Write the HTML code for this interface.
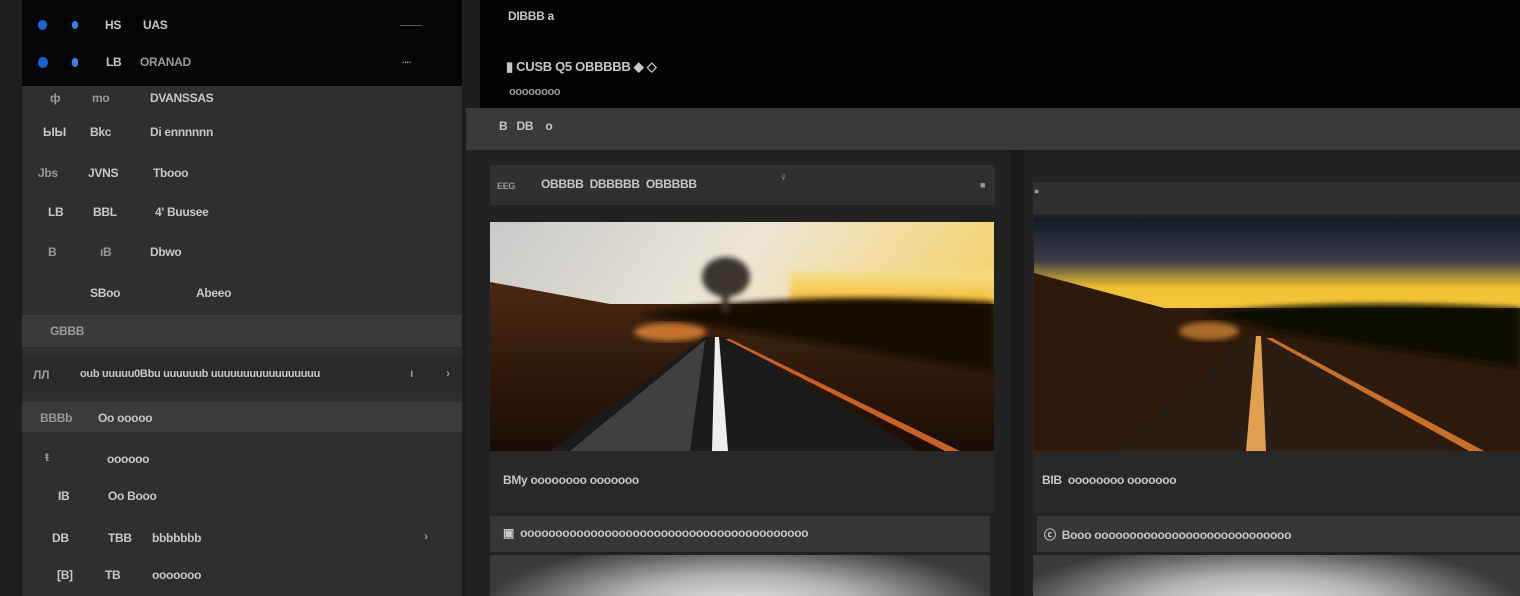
<!DOCTYPE html>
<html><head><meta charset="utf-8"><style>
*{margin:0;padding:0;box-sizing:border-box}
body{width:1520px;height:596px;overflow:hidden;background:#262626;position:relative;font-family:"Liberation Sans",sans-serif;color:#cfcfcf}
.a{position:absolute}
.t{position:absolute;font-size:12px;font-weight:bold;color:#c8c8c8;white-space:nowrap;letter-spacing:-0.3px}
.d{color:#9a9a9a}
</style></head><body>
<div class="a" style="left:0;top:0;width:22px;height:596px;background:#1e1e1e"></div>
<div class="a" style="left:22px;top:0;width:440px;height:596px;background:#2f2f2f"></div>
<div class="a" style="left:22px;top:0;width:440px;height:86px;background:#050505"></div>
<div class="a" style="left:38px;top:20px;width:9px;height:10px;border-radius:5px;background:#1e63d8"></div>
<div class="a" style="left:72px;top:21px;width:6px;height:8px;border-radius:3px;background:#3a7fe0"></div>
<div class="a" style="left:38px;top:57px;width:10px;height:11px;border-radius:5px;background:#1e5fd0"></div>
<div class="a" style="left:72px;top:58px;width:6px;height:9px;border-radius:3px;background:#3a7fe0"></div>
<div class="t" style="left:105px;top:18px">HS</div><div class="t" style="left:143px;top:18px">UAS</div>
<div class="t" style="left:106px;top:55px">LB</div><div class="t d" style="left:140px;top:55px">ORANAD</div>
<div class="a" style="left:400px;top:25px;width:22px;height:1px;background:#555"></div>
<div class="t d" style="left:402px;top:55px;font-size:9px">....</div>
<div class="t d" style="left:50px;top:91px">ф</div><div class="t d" style="left:92px;top:91px">mo</div><div class="t" style="left:150px;top:91px">DVANSSAS</div>
<div class="t" style="left:43px;top:125px">ЫЫ</div><div class="t" style="left:90px;top:125px">Bkc</div><div class="t" style="left:150px;top:125px">Di ennnnnn</div>
<div class="t d" style="left:38px;top:166px">Jbs</div><div class="t" style="left:88px;top:166px">JVNS</div><div class="t" style="left:153px;top:166px">Tbooo</div>
<div class="t" style="left:48px;top:205px">LB</div><div class="t" style="left:93px;top:205px">BBL</div><div class="t" style="left:155px;top:205px">4' Buusee</div>
<div class="t d" style="left:48px;top:245px">B</div><div class="t d" style="left:100px;top:245px">ıB</div><div class="t" style="left:150px;top:245px">Dbwo</div>
<div class="t" style="left:90px;top:286px">SBoo</div><div class="t" style="left:196px;top:286px">Abeeo</div>
<div class="a" style="left:22px;top:315px;width:440px;height:32px;background:#3a3a3a"></div>
<div class="t d" style="left:50px;top:324px">GBBB</div>
<div class="a" style="left:22px;top:355px;width:440px;height:38px;background:#2a2a2a"></div>
<div class="t d" style="left:33px;top:368px">ЛЛ</div><div class="t" style="left:80px;top:368px;font-size:11px">oub uuuuu0Bbu uuuuuub uuuuuuuuuuuuuuuuu</div>
<div class="t d" style="left:410px;top:366px">ı</div><div class="t d" style="left:446px;top:366px">›</div>
<div class="a" style="left:22px;top:402px;width:440px;height:30px;background:#3b3b3b"></div>
<div class="t d" style="left:40px;top:411px">BBBb</div><div class="t" style="left:98px;top:411px">Oo ooooo</div>
<div class="t d" style="left:45px;top:450px">ŧ</div><div class="t" style="left:107px;top:452px">oooooo</div>
<div class="t" style="left:58px;top:489px">IB</div><div class="t" style="left:108px;top:489px">Oo Booo</div>
<div class="t" style="left:52px;top:531px">DB</div><div class="t" style="left:108px;top:531px">TBB</div><div class="t" style="left:152px;top:531px">bbbbbbb</div><div class="t d" style="left:424px;top:529px">›</div>
<div class="t" style="left:57px;top:568px">[B]</div><div class="t" style="left:105px;top:568px">TB</div><div class="t" style="left:152px;top:568px">ooooooo</div>

<div class="a" style="left:462px;top:0;width:18px;height:596px;background:#1d1d1d"></div>
<div class="a" style="left:480px;top:0;width:1040px;height:108px;background:#030303"></div>
<div class="t" style="left:508px;top:9px">DIBBB a</div>
<div class="t" style="left:506px;top:59px;font-size:13px">▮ CUSB Q5 OBBBBB ◆ ◇</div>
<div class="t d" style="left:509px;top:86px;font-size:11px">oooooooo</div>
<div class="a" style="left:466px;top:108px;width:1054px;height:42px;background:#3a3a3a"></div>
<div class="t" style="left:499px;top:119px">B &nbsp; DB &nbsp; &nbsp;o</div>
<div class="a" style="left:466px;top:150px;width:1054px;height:446px;background:#222"></div>
<div class="a" style="left:1010px;top:150px;width:14px;height:446px;background:#1a1a1a"></div>

<!-- card1 -->
<div class="a" style="left:490px;top:165px;width:505px;height:40px;background:#303030"></div>
<div class="t d" style="left:497px;top:181px;font-size:9px">EEG</div>
<div class="t" style="left:541px;top:177px">OBBBB &nbsp;DBBBBB &nbsp;OBBBBB</div>
<div class="t d" style="left:779px;top:170px">♀</div><div class="t d" style="left:980px;top:180px;font-size:9px">■</div>
<svg class="a" style="left:490px;top:222px" width="504" height="229" viewBox="0 0 504 229">
<defs><linearGradient id="s1" x1="0" y1="0" x2="1" y2="0.3"><stop offset="0" stop-color="#c9c9c9"/><stop offset="0.5" stop-color="#ece6d8"/><stop offset="1" stop-color="#f7d36a"/></linearGradient>
<linearGradient id="h1" x1="0" y1="0" x2="0" y2="1"><stop offset="0" stop-color="#f8e08a"/><stop offset="1" stop-color="#f3b020"/></linearGradient>
<linearGradient id="g1" x1="0" y1="0" x2="0" y2="1"><stop offset="0" stop-color="#4a2810"/><stop offset="1" stop-color="#1a0d06"/></linearGradient>
<filter id="b"><feGaussianBlur stdDeviation="3"/></filter></defs>
<rect width="504" height="229" fill="url(#s1)"/>
<rect x="300" y="50" width="204" height="40" fill="url(#h1)" filter="url(#b)"/>
<path d="M0 60 L120 82 L504 82 L504 229 L0 229Z" fill="url(#g1)"/>
<path d="M150 92 Q300 68 504 80 L504 150 L260 110Z" fill="#140a05" filter="url(#b)"/>
<g fill="#3a342e" filter="url(#b)"><ellipse cx="236" cy="55" rx="24" ry="20"/><rect x="232" y="60" width="7" height="30"/></g>
<ellipse cx="180" cy="110" rx="36" ry="9" fill="#e8883a" opacity="0.8" filter="url(#b)"/>
<path d="M215 115 L235 115 L430 229 L60 229Z" fill="#1b1a1a"/>
<path d="M215 118 L80 229 L200 229Z" fill="#666" opacity="0.5"/>
<path d="M225 115 L229 115 L238 229 L222 229Z" fill="#eee"/>
<path d="M235 117 L240 117 L470 229 L455 229Z" fill="#c8602a"/>
</svg>
<div class="a" style="left:490px;top:451px;width:505px;height:62px;background:#282828"></div>
<div class="t" style="left:503px;top:473px">BMy oooooooo ooooooo</div>
<div class="a" style="left:490px;top:516px;width:500px;height:36px;background:#363636"></div>
<div class="t" style="left:503px;top:526px">▣ &nbsp;ooooooooooooooooooooooooooooooooooooooooo</div>
<div class="a" style="left:490px;top:555px;width:500px;height:41px;background:radial-gradient(ellipse 260px 70px at 250px 55px,#f0f0f0,#b0b0b0 50%,#3a3a3a 100%)"></div>

<!-- card2 -->
<div class="a" style="left:1033px;top:182px;width:487px;height:32px;background:#303030"></div>
<div class="t d" style="left:1034px;top:186px;font-size:9px">●</div>
<svg class="a" style="left:1034px;top:218px" width="486" height="233" viewBox="0 0 486 233">
<defs><linearGradient id="s2" x1="0" y1="0" x2="0" y2="1"><stop offset="0" stop-color="#141a28"/><stop offset="0.18" stop-color="#3a3c48"/><stop offset="0.3" stop-color="#f0c030"/><stop offset="0.45" stop-color="#f6cc40"/><stop offset="0.55" stop-color="#6a3a10"/></linearGradient>
<filter id="b2"><feGaussianBlur stdDeviation="3"/></filter></defs>
<rect width="486" height="233" fill="url(#s2)"/>
<path d="M0 55 L130 90 L486 90 L486 233 L0 233Z" fill="#2e1a0a"/>
<path d="M170 95 Q300 80 486 90 L486 150 L250 115Z" fill="#110804" filter="url(#b2)"/>
<ellipse cx="175" cy="113" rx="30" ry="9" fill="#e0903a" opacity="0.7" filter="url(#b2)"/>
<path d="M215 118 L232 118 L420 233 L80 233Z" fill="#2a1d14"/>
<path d="M222 118 L227 118 L232 233 L212 233Z" fill="#e0a050"/>
<path d="M232 120 L238 120 L450 233 L435 233Z" fill="#c8702a"/>
</svg>
<div class="a" style="left:1033px;top:451px;width:487px;height:62px;background:#282828"></div>
<div class="t" style="left:1042px;top:473px">BIB &nbsp;oooooooo ooooooo</div>
<div class="a" style="left:1037px;top:516px;width:483px;height:36px;background:#363636"></div>
<div class="t" style="left:1044px;top:526px">ⓒ &nbsp;Booo oooooooooooooooooooooooooooo</div>
<div class="a" style="left:1033px;top:555px;width:487px;height:41px;background:radial-gradient(ellipse 260px 70px at 230px 55px,#f0f0f0,#b0b0b0 50%,#3a3a3a 100%)"></div>
</body></html>
